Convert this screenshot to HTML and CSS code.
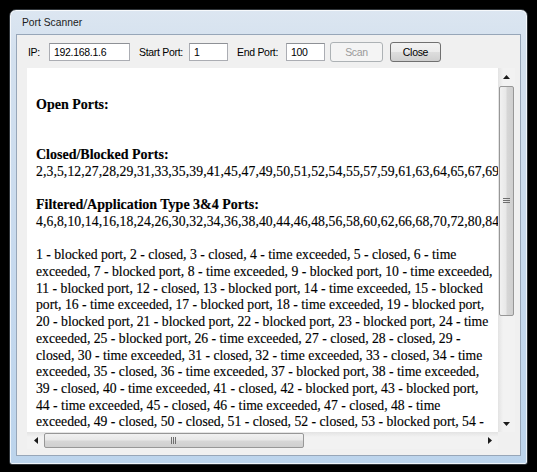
FILE: index.html
```html
<!DOCTYPE html>
<html>
<head>
<meta charset="utf-8">
<title>Port Scanner</title>
<link rel="stylesheet" href="styles.css">
</head>
<body>
<div class="window">
  <div class="titlebar"><span class="title">Port Scanner</span></div>
  <div class="client">
    <div class="toolbar">
      <label class="lbl lbl-ip">IP:</label>
      <div class="tb tb-ip">192.168.1.6</div>
      <label class="lbl lbl-start">Start Port:</label>
      <div class="tb tb-port">1</div>
      <label class="lbl lbl-end">End Port:</label>
      <div class="tb tb-port">100</div>
      <div class="btn btn-disabled">Scan</div>
      <div class="btn btn-close">Close</div>
    </div>
    <div class="browser">
      <div class="browser-row">
        <div class="viewport">
          <div class="doc">
            <div class="line"><b>Open Ports:</b></div>
            <div class="line">&nbsp;</div>
            <div class="line">&nbsp;</div>
            <div class="line"><b>Closed/Blocked Ports:</b></div>
            <div class="line nums">2,3,5,12,27,28,29,31,33,35,39,41,45,47,49,50,51,52,54,55,57,59,61,63,64,65,67,69</div>
            <div class="line">&nbsp;</div>
            <div class="line"><b>Filtered/Application Type 3&amp;4 Ports:</b></div>
            <div class="line nums">4,6,8,10,14,16,18,24,26,30,32,34,36,38,40,44,46,48,56,58,60,62,66,68,70,72,80,84</div>
            <div class="line">&nbsp;</div>
            <div class="line">1 - blocked port, 2 - closed, 3 - closed, 4 - time exceeded, 5 - closed, 6 - time</div>
            <div class="line">exceeded, 7 - blocked port, 8 - time exceeded, 9 - blocked port, 10 - time exceeded,</div>
            <div class="line">11 - blocked port, 12 - closed, 13 - blocked port, 14 - time exceeded, 15 - blocked</div>
            <div class="line">port, 16 - time exceeded, 17 - blocked port, 18 - time exceeded, 19 - blocked port,</div>
            <div class="line">20 - blocked port, 21 - blocked port, 22 - blocked port, 23 - blocked port, 24 - time</div>
            <div class="line">exceeded, 25 - blocked port, 26 - time exceeded, 27 - closed, 28 - closed, 29 -</div>
            <div class="line">closed, 30 - time exceeded, 31 - closed, 32 - time exceeded, 33 - closed, 34 - time</div>
            <div class="line">exceeded, 35 - closed, 36 - time exceeded, 37 - blocked port, 38 - time exceeded,</div>
            <div class="line">39 - closed, 40 - time exceeded, 41 - closed, 42 - blocked port, 43 - blocked port,</div>
            <div class="line">44 - time exceeded, 45 - closed, 46 - time exceeded, 47 - closed, 48 - time</div>
            <div class="line">exceeded, 49 - closed, 50 - closed, 51 - closed, 52 - closed, 53 - blocked port, 54 -</div>
          </div>
        </div>
        <div class="vscroll">
          <div class="arrow"><svg width="7" height="4" viewBox="0 0 7 4"><path d="M3.5 0 L7 4 L0 4 Z" fill="#1a1a1a"/></svg></div>
          <div class="vtrack">
            <div class="vthumb"><svg width="7" height="6" viewBox="0 0 7 6"><path d="M0 0.5H7M0 2.5H7M0 4.5H7" stroke="#6f6f6f" stroke-width="1"/></svg></div>
          </div>
          <div class="arrow"><svg width="7" height="4" viewBox="0 0 7 4"><path d="M0 0 L7 0 L3.5 4 Z" fill="#1a1a1a"/></svg></div>
        </div>
      </div>
      <div class="hscroll">
        <div class="harrow"><svg width="4" height="7" viewBox="0 0 4 7"><path d="M4 0 L4 7 L0 3.5 Z" fill="#1a1a1a"/></svg></div>
        <div class="htrack">
          <div class="hthumb"><svg width="6" height="7" viewBox="0 0 6 7"><path d="M0.5 0V7M2.5 0V7M4.5 0V7" stroke="#6f6f6f" stroke-width="1"/></svg></div>
        </div>
        <div class="harrow"><svg width="4" height="7" viewBox="0 0 4 7"><path d="M0 0 L4 3.5 L0 7 Z" fill="#1a1a1a"/></svg></div>
        <div class="corner"></div>
      </div>
    </div>
  </div>
</div>
</body>
</html>
```

FILE: styles.css
```css
html, body {
  margin: 0;
  padding: 0;
  background: #000;
}
body {
  padding: 9px 0 0 9px;
  width: 537px;
  height: 472px;
  box-sizing: border-box;
  overflow: hidden;
}
.window {
  width: 519px;
  height: 456px;
  box-sizing: border-box;
  border: 1px solid #2e3338;
  border-radius: 7px 7px 3px 3px;
  background: linear-gradient(180deg, #dce6f1 0%, #d3e0ee 10%, #c6d9ee 60%, #bcd4ec 100%);
  box-shadow: inset 0 0 0 1px rgba(255,255,255,0.75);
  display: flex;
  flex-direction: column;
  padding: 0 6px 8px 6px;
}
.titlebar {
  height: 23px;
  display: flex;
  align-items: center;
  padding-left: 6px;
  padding-top: 1px;
}
.title {
  font-family: "Liberation Sans", Arial, sans-serif;
  font-size: 10.3px;
  color: #1b1b1b;
}
.client {
  flex: 1;
  background: #f0f0f0;
  border: 1px solid #97a6b8;
  display: flex;
  flex-direction: column;
  padding: 0 7px 6px 10px;
}
.toolbar {
  height: 33px;
  display: flex;
  align-items: center;
  font-family: "Liberation Sans", Arial, sans-serif;
  font-size: 10.5px;
  letter-spacing: -0.3px;
  color: #000;
}
.lbl {
  white-space: nowrap;
  display: block;
}
.lbl-ip { margin-left: 1px; width: 21px; }
.lbl-start { margin-left: 9px; width: 50px; }
.lbl-end { margin-left: 9px; width: 49px; }
.tb {
  height: 18px;
  box-sizing: border-box;
  background: #fff;
  border: 1px solid #abadb3;
  border-top-color: #8e9196;
  padding: 0 0 0 4px;
  line-height: 16px;
}
.tb-ip { width: 81px; }
.tb-port { width: 39px; }
.btn {
  height: 20px;
  box-sizing: border-box;
  border: 1px solid #707070;
  border-radius: 3px;
  background: linear-gradient(180deg, #f2f2f2 0%, #ebebeb 50%, #dddddd 51%, #cfcfcf 100%);
  text-align: center;
  line-height: 18px;
}
.btn-disabled {
  margin-left: 5px;
  width: 53px;
  border-color: #adb2b5;
  background: #f4f4f4;
  color: #9a9a9a;
}
.btn-close {
  margin-left: 7px;
  width: 51px;
}
.browser {
  width: 488px;
  height: 381px;
  display: flex;
  flex-direction: column;
  background: #f0f0f0;
}
.browser-row {
  flex: 1;
  display: flex;
  min-height: 0;
}
.viewport {
  flex: 1;
  background: #fff;
  overflow: hidden;
}
.doc {
  padding: 29px 0 0 9px;
  font-family: "Liberation Serif", "Times New Roman", serif;
  font-size: 13.7px;
  color: #000;
  -webkit-text-stroke: 0.15px #000;
}
.doc b {
  font-size: 14px;
}
.line {
  white-space: nowrap;
  line-height: 16.7px;
}
.nums {
  letter-spacing: 0.1px;
}
.vscroll {
  width: 17px;
  display: flex;
  flex-direction: column;
  background: linear-gradient(90deg, #e3e3e3 0%, #f2f2f2 30%, #f2f2f2 100%);
}
.arrow {
  height: 17px;
  display: flex;
  align-items: center;
  justify-content: center;
}
.vtrack {
  flex: 1;
  padding: 1px 1px 0 1px;
}
.vthumb {
  height: 230px;
  box-sizing: border-box;
  border: 1px solid #979797;
  border-radius: 2px;
  background: linear-gradient(90deg, #f1f1f1 0%, #e8e8e8 45%, #d6d6d6 55%, #cfcfcf 100%);
  display: flex;
  align-items: center;
  justify-content: center;
}
.hscroll {
  height: 17px;
  display: flex;
  background: linear-gradient(180deg, #e3e3e3 0%, #f2f2f2 30%, #f2f2f2 100%);
}
.harrow {
  width: 17px;
  display: flex;
  align-items: center;
  justify-content: center;
}
.htrack {
  flex: 1;
  padding: 1px 0 1px 0;
}
.hthumb {
  width: 260px;
  height: 15px;
  box-sizing: border-box;
  border: 1px solid #979797;
  border-radius: 2px;
  background: linear-gradient(180deg, #f1f1f1 0%, #e8e8e8 45%, #d6d6d6 55%, #cfcfcf 100%);
  display: flex;
  align-items: center;
  justify-content: center;
}
.corner {
  width: 17px;
  background: #f0f0f0;
}
```
